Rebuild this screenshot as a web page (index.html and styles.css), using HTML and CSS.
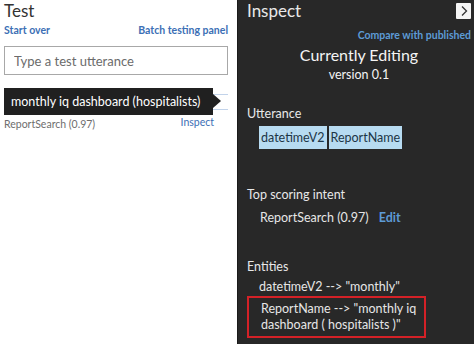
FILE: index.html
```html
<!DOCTYPE html>
<html lang="en">
<head>
    <meta charset="UTF-8">
    <title>Test and Inspect</title>
    <link rel="stylesheet" href="styles.css">
</head>
<body>
    <div class="layout">
        <div class="test-panel">
            <h1 class="panel-title">Test</h1>
            <div class="link-row">
                <a class="link">Start over</a>
                <a class="link">Batch testing panel</a>
            </div>
            <input class="utterance-input" type="text" placeholder="Type a test utterance">

            <div class="result-row">
                <div class="result-tip">monthly iq dashboard (hospitalists)</div>
            </div>
            <div class="result-meta">
                <span>ReportSearch (0.97)</span>
                <a class="inspect-link">Inspect</a>
            </div>
        </div>

        <div class="inspect-panel">
            <div class="inspect-head">
                <h1 class="panel-title">Inspect</h1>
                <button class="close-button">
                    <svg width="10" height="12" viewBox="0 0 10 12"><path d="M3 1.5 L7.5 6 L3 10.5" fill="none" stroke="#333" stroke-width="1.3"/></svg>
                </button>
            </div>
            <div class="compare-row"><a class="link">Compare with published</a></div>
            <div class="editing">
                <div class="editing-title">Currently Editing</div>
                <div class="editing-version">version 0.1</div>
            </div>

            <div class="section">
                <div class="section-label">Utterance</div>
                <div class="tags">
                    <span class="tag">datetimeV2</span>
                    <span class="tag">ReportName</span>
                </div>
            </div>

            <div class="section section-intent">
                <div class="section-label">Top scoring intent</div>
                <div class="intent-row">
                    <span>ReportSearch (0.97)</span>
                    <a class="edit-link">Edit</a>
                </div>
            </div>

            <div class="section section-entities">
                <div class="section-label">Entities</div>
                <div class="entity">datetimeV2 --&gt; "monthly"</div>
                <div class="entity entity-marked">ReportName --&gt; "monthly iq dashboard ( hospitalists )"</div>
            </div>
        </div>
    </div>
</body>
</html>
```

FILE: styles.css
```css
html, body {
    margin: 0;
    padding: 0;
    height: 100%;
}
body {
    font-family: Lato, "Open Sans", sans-serif;
    background-color: #fff;
}
.layout {
    display: flex;
    height: 344px;
    overflow: hidden;
}
.test-panel {
    width: 224px;
    padding: 0 9px 0 4px;
    background-color: #fff;
    color: #333;
}
.panel-title {
    margin: 0;
    font-size: 17px;
    font-weight: normal;
    line-height: 22px;
}
.test-panel .panel-title {
    color: #333;
}
.link-row {
    display: flex;
    justify-content: space-between;
    margin-top: 1px;
    line-height: 14px;
}
.link {
    color: #3c6fb5;
    font-size: 10.5px;
    font-weight: 700;
}
.utterance-input {
    display: block;
    box-sizing: border-box;
    width: 224px;
    height: 29px;
    margin-top: 9px;
    padding: 0 9px;
    border: 1px solid #a8a8a8;
    font-family: inherit;
    font-size: 13px;
    color: #333;
}
.utterance-input::placeholder {
    color: #6b6b6b;
}
.result-row {
    position: relative;
    height: 14px;
    margin-top: 19px;
    border-top: 1px solid #c2d3ea;
    border-bottom: 1px solid #c2d3ea;
}
.result-tip {
    position: absolute;
    left: 0;
    top: -7px;
    width: 202px;
    height: 27px;
    padding-left: 7px;
    background-color: #202020;
    color: #fff;
    font-size: 12.5px;
    line-height: 27px;
    white-space: nowrap;
}
.result-tip::after {
    content: "";
    position: absolute;
    right: -8px;
    top: 6px;
    border-top: 7px solid transparent;
    border-bottom: 7px solid transparent;
    border-left: 8px solid #202020;
}
.result-meta {
    display: flex;
    justify-content: space-between;
    padding-right: 14px;
    margin-top: 8px;
    font-size: 10.5px;
    color: #6e6e6e;
}
.inspect-link {
    color: #3c6fb5;
    margin-top: -2px;
}

.inspect-panel {
    flex: 1;
    background-color: #282828;
    border-left: 1px solid #1a1a1a;
    padding: 0 3px 0 9px;
    color: #e6e6e6;
}
.inspect-head {
    display: flex;
    justify-content: space-between;
    align-items: flex-start;
}
.inspect-panel .panel-title {
    color: #e8e8e8;
}
.close-button {
    width: 15px;
    height: 16px;
    margin-top: 3px;
    padding: 0;
    border: none;
    border-radius: 1px;
    background-color: #f4f4f4;
    display: flex;
    align-items: center;
    justify-content: center;
}
.compare-row {
    text-align: right;
    line-height: 14px;
    margin-top: 4px;
}
.compare-row .link {
    color: #5d9bd6;
}
.editing {
    text-align: center;
    margin-top: 2px;
}
.editing-title {
    font-size: 16px;
    line-height: 22px;
    color: #f4f4f4;
}
.editing-version {
    font-size: 12.5px;
    line-height: 18px;
    color: #f4f4f4;
}
.section {
    margin-top: 21px;
}
.section-label {
    font-size: 12.5px;
    line-height: 18px;
    color: #e8e8e8;
}
.tags {
    display: flex;
    gap: 2px;
    margin: 3px 0 0 12px;
}
.tag {
    background-color: #b7dbf1;
    color: #1c3546;
    font-size: 12.5px;
    line-height: 23px;
    padding: 0 2px;
}
.section-intent {
    margin-top: 37px;
}
.intent-row {
    margin: 5px 0 0 13px;
    font-size: 12.5px;
    line-height: 18px;
}
.edit-link {
    color: #5d9bd6;
    font-weight: 700;
    margin-left: 7px;
}
.section-entities {
    margin-top: 31px;
}
.entity {
    margin: 3px 0 0 12px;
    font-size: 12.5px;
    line-height: 16px;
}
.entity-marked {
    width: 158px;
    margin: 1px 0 0 0;
    padding: 3px 5px 3px 12px;
    border: 2px solid #d42127;
}
```
